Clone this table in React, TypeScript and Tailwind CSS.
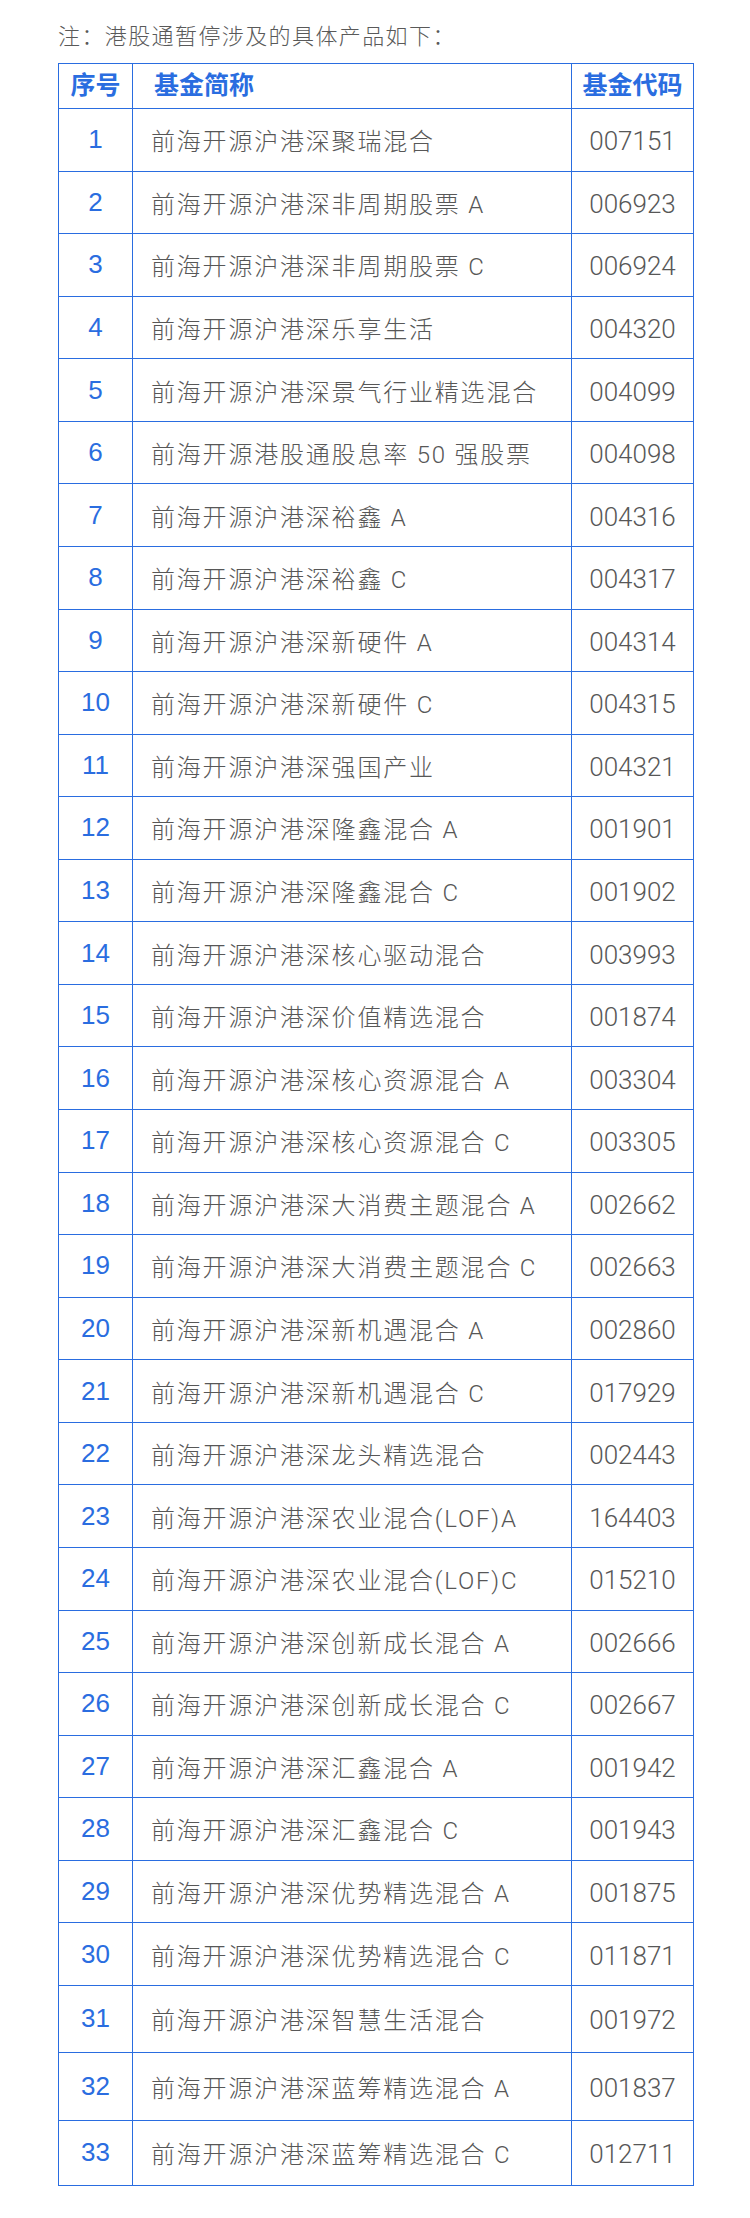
const funds: [string, string][] = [
  ["前海开源沪港深聚瑞混合", "007151"],
  ["前海开源沪港深非周期股票 A", "006923"],
  ["前海开源沪港深非周期股票 C", "006924"],
  ["前海开源沪港深乐享生活", "004320"],
  ["前海开源沪港深景气行业精选混合", "004099"],
  ["前海开源港股通股息率 50 强股票", "004098"],
  ["前海开源沪港深裕鑫 A", "004316"],
  ["前海开源沪港深裕鑫 C", "004317"],
  ["前海开源沪港深新硬件 A", "004314"],
  ["前海开源沪港深新硬件 C", "004315"],
  ["前海开源沪港深强国产业", "004321"],
  ["前海开源沪港深隆鑫混合 A", "001901"],
  ["前海开源沪港深隆鑫混合 C", "001902"],
  ["前海开源沪港深核心驱动混合", "003993"],
  ["前海开源沪港深价值精选混合", "001874"],
  ["前海开源沪港深核心资源混合 A", "003304"],
  ["前海开源沪港深核心资源混合 C", "003305"],
  ["前海开源沪港深大消费主题混合 A", "002662"],
  ["前海开源沪港深大消费主题混合 C", "002663"],
  ["前海开源沪港深新机遇混合 A", "002860"],
  ["前海开源沪港深新机遇混合 C", "017929"],
  ["前海开源沪港深龙头精选混合", "002443"],
  ["前海开源沪港深农业混合(LOF)A", "164403"],
  ["前海开源沪港深农业混合(LOF)C", "015210"],
  ["前海开源沪港深创新成长混合 A", "002666"],
  ["前海开源沪港深创新成长混合 C", "002667"],
  ["前海开源沪港深汇鑫混合 A", "001942"],
  ["前海开源沪港深汇鑫混合 C", "001943"],
  ["前海开源沪港深优势精选混合 A", "001875"],
  ["前海开源沪港深优势精选混合 C", "011871"],
  ["前海开源沪港深智慧生活混合", "001972"],
  ["前海开源沪港深蓝筹精选混合 A", "001837"],
  ["前海开源沪港深蓝筹精选混合 C", "012711"],
];

// the last three rows in the source are a little taller than the rest
function rowHeight(i: number): number {
  if (i === 30) return 67;
  if (i === 31) return 68;
  if (i === 32) return 64;
  return 62.57;
}

const cjk = "font-['Roboto','Noto_Sans_CJK_SC',sans-serif]";

export default function App() {
  return (
    <div className="min-h-[2218px] w-[750px] bg-white">
      <div className="pl-[58px] pt-[24px]">
        <p
          className={`${cjk} text-[22px] leading-[26px] tracking-[1.4px] font-light text-[#595959]`}
        >
          注：港股通暂停涉及的具体产品如下：
        </p>

        <div className="mt-[13px] w-[636px] border border-[#2a6de0]">
          <div className="flex h-[45px] border-b border-[#2a6de0]">
            <div
              className={`flex w-[74px] items-center justify-center border-r border-[#2a6de0] ${cjk} text-[25px] font-bold text-[#2a6de0]`}
            >
              序号
            </div>
            <div
              className={`flex w-[439px] items-center border-r border-[#2a6de0] pl-[21px] ${cjk} text-[25px] font-bold text-[#2a6de0]`}
            >
              基金简称
            </div>
            <div
              className={`flex flex-1 items-center justify-center ${cjk} text-[25px] font-bold text-[#2a6de0]`}
            >
              基金代码
            </div>
          </div>

          {funds.map(([name, code], i) => (
            <div
              key={code}
              className={`flex ${i < funds.length - 1 ? "border-b border-[#2a6de0]" : ""}`}
              style={{ height: rowHeight(i) }}
            >
              <div className="flex w-[74px] items-center justify-center border-r border-[#2a6de0] font-['Liberation_Sans',sans-serif] text-[26px] text-[#2a6de0]">
                {i + 1}
              </div>
              <div
                className={`flex w-[439px] items-center border-r border-[#2a6de0] pl-[18px] pt-[5px] ${cjk} text-[24px] font-light tracking-[1.8px] whitespace-nowrap text-[#575757]`}
              >
                {name}
              </div>
              <div className="flex flex-1 items-center justify-center pt-[4px] font-['Roboto',sans-serif] text-[26px] font-light text-[#575757]">
                {code}
              </div>
            </div>
          ))}
        </div>
      </div>
    </div>
  );
}
